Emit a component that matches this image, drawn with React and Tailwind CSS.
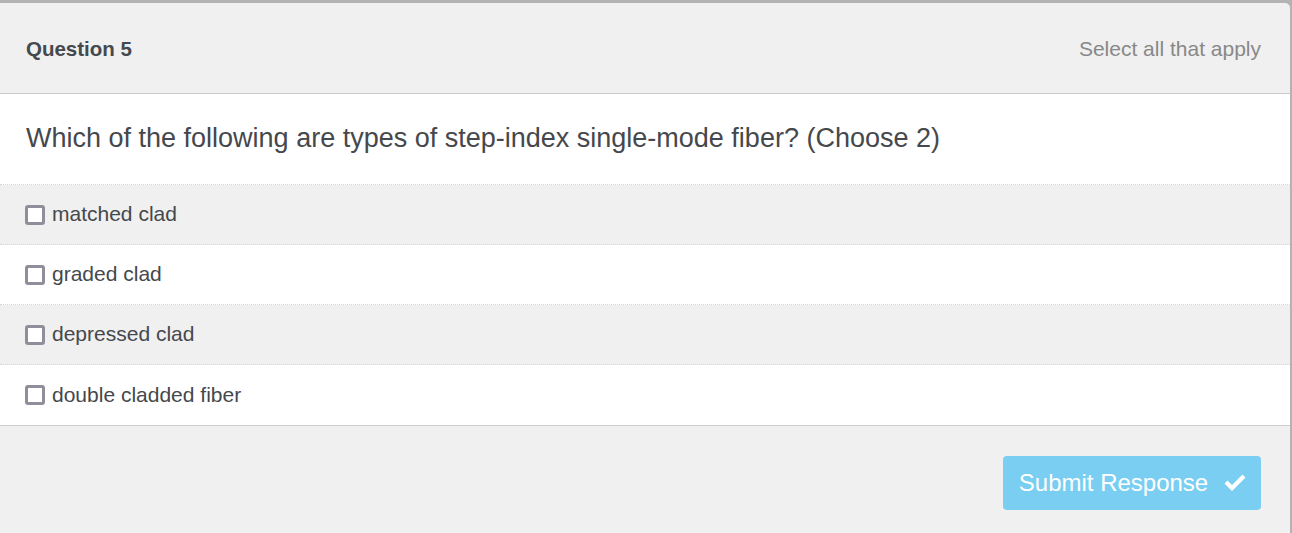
import React from "react";

const options = ["matched clad", "graded clad", "depressed clad", "double cladded fiber"];

const Checkbox = () => (
  <span className="inline-block w-[20px] h-[20px] border-[3px] border-[#918e9b] rounded-[3px] bg-white shrink-0" />
);

const App = () => {
  return (
    <div
      className="min-h-screen bg-[#b3b3b3] pt-[3px] pr-[2px]"
      style={{ fontFamily: '"Liberation Sans", Arial, sans-serif' }}
    >
      <div className="bg-[#f0f0f0] rounded-tr-[5px] min-h-[530px] flex flex-col text-[#45484c]">
        <div className="h-[91px] flex items-center justify-between pl-[26px] pr-[29px] border-b border-[#cccccc]">
          <h2 className="text-[20.5px] font-bold pt-[2px]">Question 5</h2>
          <span className="text-[21px] text-[#888888] pt-[2px]">Select all that apply</span>
        </div>

        <div className="h-[91px] bg-white flex items-center pl-[26px] border-b border-dotted border-[#d6d6d6]">
          <p className="text-[27px] pb-[2px]">
            Which of the following are types of step-index single-mode fiber? (Choose 2)
          </p>
        </div>

        {options.map((opt, i) => (
          <label
            key={opt}
            className={`flex items-center gap-[7px] pl-[25px] text-[21px] cursor-pointer ${
              i % 2 === 0 ? "bg-[#f0f0f0]" : "bg-white"
            } ${i === options.length - 1 ? "border-b border-[#cccccc] h-[61px]" : "border-b border-dotted border-[#d6d6d6] h-[60px]"}`}
          >
            <Checkbox />
            <span className="pb-[1px]">{opt}</span>
          </label>
        ))}

        <div className="flex justify-end pt-[30px] pr-[29px]">
          <button
            type="button"
            className="w-[258px] h-[54px] rounded-[4px] bg-[#79cef1] text-white text-[24px] flex items-center justify-center gap-[15px] pl-[2px]"
          >
            <span>Submit Response</span>
            <svg width="24" height="20" viewBox="0 0 24 20" fill="white">
              <path d="M1.5 10.5 L4.5 7.5 L9 12 L19.5 1.5 L22.5 4.5 L9 18 Z" />
            </svg>
          </button>
        </div>
      </div>
    </div>
  );
};

export default App;
